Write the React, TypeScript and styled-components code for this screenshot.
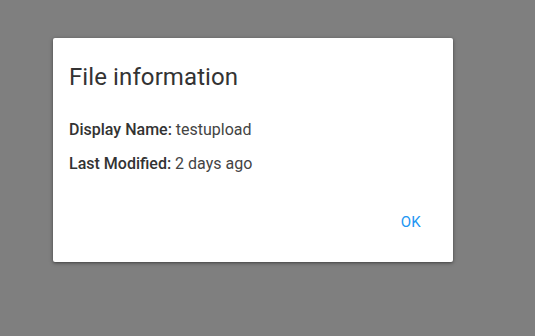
import styled, { createGlobalStyle } from 'styled-components';

const Global = createGlobalStyle`
  html, body {
    margin: 0;
    padding: 0;
    background: #7f7f7f;
    font-family: Roboto, "Liberation Sans", sans-serif;
  }
`;

const Overlay = styled.div`
  width: 535px;
  height: 336px;
  padding: 38px 0 0 53px;
  box-sizing: border-box;
`;

const Dialog = styled.div`
  width: 400px;
  height: 224px;
  box-sizing: border-box;
  background: #fff;
  border-radius: 2px;
  box-shadow: 0 1px 4px rgba(0, 0, 0, 0.35), 0 1px 2px rgba(0, 0, 0, 0.2);
  display: flex;
  flex-direction: column;
`;

const Title = styled.h3`
  margin: 0;
  padding: 23px 16px 0 16px;
  font-size: 24px;
  line-height: 32px;
  font-weight: 400;
  letter-spacing: 0.1px;
  color: #333;
`;

const Body = styled.div`
  padding: 27px 16px 0 16px;
  display: flex;
  flex-direction: column;
  gap: 14px;
`;

const Row = styled.div`
  font-size: 16px;
  line-height: 20px;
  color: #444;
`;

const Label = styled.span`
  font-weight: 500;
  color: #333;
`;

const Actions = styled.div`
  margin-top: auto;
  display: flex;
  justify-content: flex-end;
  padding: 0 24px 22px 0;
`;

const TextButton = styled.button`
  border: 0;
  background: none;
  padding: 0 8px;
  height: 36px;
  line-height: 36px;
  font-family: Roboto, "Liberation Sans", sans-serif;
  font-size: 15px;
  letter-spacing: 0.3px;
  color: #2196f3;
  cursor: pointer;
`;

export default function App() {
  return (
    <>
      <Global />
      <Overlay>
        <Dialog>
          <Title>File information</Title>
          <Body>
            <Row>
              <Label>Display Name:</Label> testupload
            </Row>
            <Row>
              <Label>Last Modified:</Label> 2 days ago
            </Row>
          </Body>
          <Actions>
            <TextButton>OK</TextButton>
          </Actions>
        </Dialog>
      </Overlay>
    </>
  );
}
